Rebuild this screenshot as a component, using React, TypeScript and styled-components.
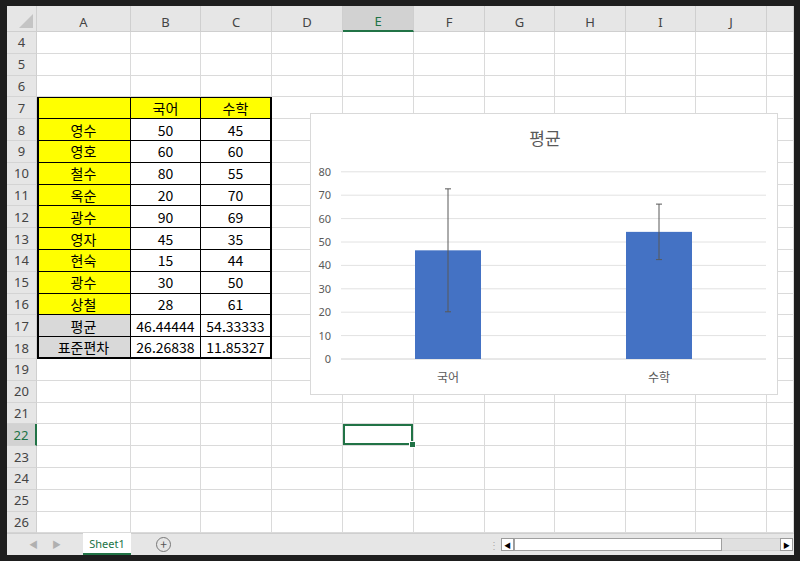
import styled, { createGlobalStyle } from "styled-components";

const Global = createGlobalStyle`
  html, body { margin: 0; background: #1e1e1e; }
  body { font-family: "Noto Sans CJK KR", "Noto Sans", sans-serif; }
`;

const Frame = styled.div`
  padding: 6px 6px 6px 7px;
  width: 787px;
  height: 549px;
`;

const Window = styled.div`
  position: relative;
  width: 787px;
  height: 549px;
  background: #fff;
  display: flex;
  flex-direction: column;
  overflow: hidden;
`;

const COLS = [30, 94, 70, 71, 71, 71, 71, 70, 71, 70, 71, 27];

const Sheet = styled.div`
  display: grid;
  grid-template-columns: ${COLS.map((c) => c + "px").join(" ")};
  grid-template-rows: 26px repeat(23, 21.8px);
  flex: 1;
  overflow: hidden;
`;

const ColHead = styled.div<{ $sel?: boolean }>`
  background: ${(p) => (p.$sel ? "#d2d2d2" : "#e6e6e6")};
  border-right: 1px solid #cfcfcf;
  border-bottom: ${(p) => (p.$sel ? "2px solid #217346" : "1px solid #cfcfcf")};
  color: ${(p) => (p.$sel ? "#217346" : "#444")};
  font-family: "Noto Sans", sans-serif;
  font-size: 13px;
  display: flex;
  align-items: center;
  justify-content: center;
  padding-top: 6px;
  box-sizing: border-box;
`;

const Corner = styled(ColHead)`
  position: relative;
  &::after {
    content: "";
    position: absolute;
    right: 3px;
    bottom: 3px;
    border-style: solid;
    border-width: 0 0 14px 14px;
    border-color: transparent transparent #c4c4c4 transparent;
  }
`;

const RowHead = styled.div<{ $sel?: boolean }>`
  background: ${(p) => (p.$sel ? "#d2d2d2" : "#e6e6e6")};
  border-right: ${(p) => (p.$sel ? "2px solid #217346" : "1px solid #cfcfcf")};
  border-bottom: 1px solid #d4d4d4;
  color: ${(p) => (p.$sel ? "#217346" : "#444")};
  font-family: "Noto Sans", sans-serif;
  font-size: 13px;
  display: flex;
  align-items: center;
  justify-content: center;
  box-sizing: border-box;
`;

const Cell = styled.div<{
  $bg?: string;
  $tbl?: boolean;
  $top?: boolean;
  $left?: boolean;
  $right?: boolean;
  $bottom?: boolean;
  $sel?: boolean;
}>`
  position: relative;
  box-sizing: border-box;
  background: ${(p) => p.$bg || "#fff"};
  border-right: ${(p) => (p.$tbl ? (p.$right ? "2px solid #000" : "1px solid #000") : "1px solid #dadada")};
  border-bottom: ${(p) => (p.$tbl ? (p.$bottom ? "2px solid #000" : "1px solid #000") : "1px solid #dadada")};
  box-shadow: ${(p) =>
    [p.$top ? "inset 0 1px 0 #000" : "", p.$left ? "inset 2px 0 0 #000" : "", p.$sel ? "inset 0 0 0 2px #217346" : ""]
      .filter(Boolean)
      .join(", ") || "none"};
  color: #000;
  font-size: 14px;
  display: flex;
  align-items: center;
  justify-content: center;
  white-space: nowrap;
  overflow: visible;
`;

const Handle = styled.span`
  position: absolute;
  right: -3px;
  bottom: -3px;
  width: 5px;
  height: 5px;
  background: #217346;
  border: 1px solid #fff;
  z-index: 2;
`;

const ChartBox = styled.div`
  position: absolute;
  left: 303px;
  top: 107px;
  width: 468px;
  height: 282px;
  background: #fff;
  border: 1px solid #d9d9d9;
  box-sizing: border-box;
  z-index: 3;
`;

const TabBar = styled.div`
  height: 22px;
  background: #e6e6e6;
  border-top: 1px solid #cfcfcf;
  display: flex;
  align-items: stretch;
  box-sizing: border-box;
`;

const NavArrows = styled.div`
  width: 76px;
  display: flex;
  align-items: center;
  justify-content: center;
  gap: 14px;
  color: #b0b0b0;
  font-size: 9px;
`;

const Tab = styled.div`
  width: 48px;
  background: #fff;
  color: #217346;
  font-family: "Noto Sans", sans-serif;
  font-size: 11px;
  display: flex;
  align-items: center;
  justify-content: center;
  border-bottom: 2px solid #217346;
  margin-top: -1px;
  box-sizing: border-box;
`;

const AddBtn = styled.div`
  margin-left: 25px;
  width: 13px;
  height: 13px;
  align-self: center;
  border: 1px solid #777;
  border-radius: 50%;
  color: #555;
  font-size: 12px;
  line-height: 12px;
  text-align: center;
`;

const Spacer = styled.div`
  flex: 1;
`;

const Grip = styled.div`
  width: 12px;
  color: #aaa;
  font-size: 10px;
  display: flex;
  align-items: center;
`;

const Scroll = styled.div`
  width: 292px;
  display: flex;
  align-items: center;
  padding-right: 1px;
`;

const ScrollBtn = styled.div`
  width: 11px;
  height: 11px;
  border: 1px solid #9a9a9a;
  background: #fff;
  font-size: 7px;
  color: #000;
  display: flex;
  align-items: center;
  justify-content: center;
`;

const Thumb = styled.div`
  width: 206px;
  height: 11px;
  background: #fff;
  border: 1px solid #a0a0a0;
`;

const Track = styled.div`
  flex: 1;
  height: 11px;
  background: #e0e0e0;
  border-top: 1px solid #d0d0d0;
  border-bottom: 1px solid #d0d0d0;
`;

const letters = ["A", "B", "C", "D", "E", "F", "G", "H", "I", "J", ""];

type T = { t: string; bg?: string };
const Y = "#ffff00";
const G = "#d9d9d9";
const table: Record<number, T[]> = {
  7: [{ t: "", bg: Y }, { t: "국어", bg: Y }, { t: "수학", bg: Y }],
  8: [{ t: "영수", bg: Y }, { t: "50" }, { t: "45" }],
  9: [{ t: "영호", bg: Y }, { t: "60" }, { t: "60" }],
  10: [{ t: "철수", bg: Y }, { t: "80" }, { t: "55" }],
  11: [{ t: "옥순", bg: Y }, { t: "20" }, { t: "70" }],
  12: [{ t: "광수", bg: Y }, { t: "90" }, { t: "69" }],
  13: [{ t: "영자", bg: Y }, { t: "45" }, { t: "35" }],
  14: [{ t: "현숙", bg: Y }, { t: "15" }, { t: "44" }],
  15: [{ t: "광수", bg: Y }, { t: "30" }, { t: "50" }],
  16: [{ t: "상철", bg: Y }, { t: "28" }, { t: "61" }],
  17: [{ t: "평균", bg: G }, { t: "46.44444" }, { t: "54.33333" }],
  18: [{ t: "표준편차", bg: G }, { t: "26.26838" }, { t: "11.85327" }],
};

function Chart() {
  // plot coords inside chart box (chart box origin at page 310,113)
  const y0 = 245;
  const k = 2.34;
  const y = (v: number) => y0 - v * k;
  const bars = [
    { x: 104, v: 46.44, lo: 20.18, hi: 72.71, label: "국어" },
    { x: 315, v: 54.33, lo: 42.48, hi: 66.19, label: "수학" },
  ];
  return (
    <svg width="466" height="280" viewBox="0 0 466 280" fontFamily='"Noto Sans CJK KR", sans-serif'>
      <text x="234" y="31" textAnchor="middle" fontSize="17" fill="#595959">평균</text>
      {[0, 10, 20, 30, 40, 50, 60, 70, 80].map((v) => (
        <g key={v}>
          <line x1="30" x2="455" y1={y(v)} y2={y(v)} stroke={v === 0 ? "#d0d0d0" : "#e2e2e2"} />
          <text x="20" y={y(v) + 4} textAnchor="end" fontSize="11" fill="#595959" fontFamily='"Noto Sans", sans-serif'>{v}</text>
        </g>
      ))}
      {bars.map((b) => (
        <g key={b.label}>
          <rect x={b.x} y={y(b.v)} width="66" height={b.v * k} fill="#4472c4" />
          <line x1={b.x + 33} x2={b.x + 33} y1={y(b.hi)} y2={y(b.lo)} stroke="#595959" />
          <line x1={b.x + 30} x2={b.x + 36} y1={y(b.hi)} y2={y(b.hi)} stroke="#595959" />
          <line x1={b.x + 30} x2={b.x + 36} y1={y(b.lo)} y2={y(b.lo)} stroke="#595959" />
          <text x={b.x + 33} y="268" textAnchor="middle" fontSize="12" fill="#595959">{b.label}</text>
        </g>
      ))}
    </svg>
  );
}

export default function App() {
  const rows = Array.from({ length: 23 }, (_, i) => i + 4);
  return (
    <Frame>
      <Global />
      <Window>
        <Sheet>
          <Corner />
          {letters.map((l, i) => (
            <ColHead key={i} $sel={l === "E"}>{l}</ColHead>
          ))}
          {rows.map((r) => (
            <>
              <RowHead key={"h" + r} $sel={r === 22}>{r}</RowHead>
              {letters.map((_, c) => {
                const row = table[r];
                if (row && c < 3) {
                  const d = row[c];
                  return (
                    <Cell
                      key={r + "-" + c}
                      $tbl
                      $bg={d.bg}
                      $top={r === 7}
                      $left={c === 0}
                      $right={c === 2}
                      $bottom={r === 18}
                    >
                      {d.t}
                    </Cell>
                  );
                }
                const sel = r === 22 && c === 4;
                return (
                  <Cell key={r + "-" + c} $sel={sel}>
                    {sel && <Handle />}
                  </Cell>
                );
              })}
            </>
          ))}
        </Sheet>
        <ChartBox>
          <Chart />
        </ChartBox>
        <TabBar>
          <NavArrows>
            <span>◀</span>
            <span>▶</span>
          </NavArrows>
          <Tab>Sheet1</Tab>
          <AddBtn>+</AddBtn>
          <Spacer />
          <Grip>⋮</Grip>
          <Scroll>
            <ScrollBtn>◀</ScrollBtn>
            <Thumb />
            <Track />
            <ScrollBtn>▶</ScrollBtn>
          </Scroll>
        </TabBar>
      </Window>
    </Frame>
  );
}
